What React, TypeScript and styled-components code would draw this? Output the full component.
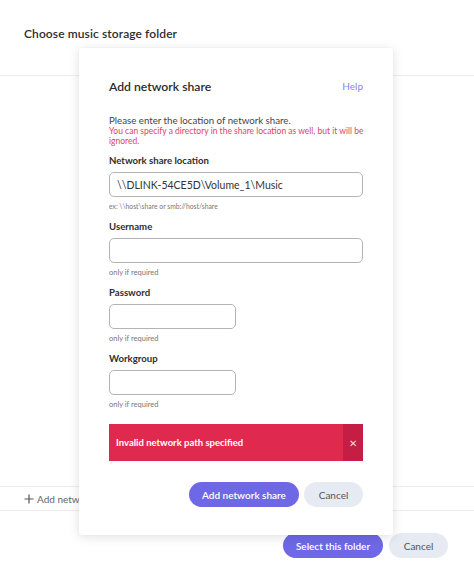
import React from "react";
import styled, { createGlobalStyle } from "styled-components";

const Global = createGlobalStyle`
  html, body { margin: 0; padding: 0; background: #fff; }
  body { font-family: Lato, "Open Sans", sans-serif; color: #333; }
  * { box-sizing: border-box; }
`;

const Page = styled.div`
  position: relative;
  width: 474px;
  height: 580px;
  overflow: hidden;
  display: flex;
  flex-direction: column;
`;

const Header = styled.div`
  height: 76px;
  border-bottom: 1px solid #ececec;
  padding: 26px 24px 0;
`;

const PageTitle = styled.h1`
  margin: 0;
  font-size: 12px;
  line-height: 16px;
  font-weight: 600;
  color: #2e2e2e;
  letter-spacing: 0.1px;
`;

const Body = styled.div`
  flex: 1;
`;

const AddRow = styled.div`
  height: 25px;
  border-top: 1px solid #ececec;
  border-bottom: 1px solid #ececec;
  display: flex;
  align-items: center;
  gap: 3px;
  padding-left: 24px;
  font-size: 10px;
  color: #666;
`;

const Footer = styled.div`
  display: flex;
  justify-content: flex-end;
  gap: 6px;
  padding: 22px 26px 22px 0;
`;

const Button = styled.button<{ $primary?: boolean; $w: number }>`
  height: 25px;
  width: ${(p) => p.$w}px;
  border: none;
  border-radius: 13px;
  font-family: Lato, sans-serif;
  font-size: 10px;
  font-weight: ${(p) => (p.$primary ? 600 : 400)};
  color: ${(p) => (p.$primary ? "#fff" : "#555")};
  background: ${(p) => (p.$primary ? "#6e68e6" : "#e6eaf3")};
  padding: 0;
  cursor: pointer;
`;

const Modal = styled.div`
  position: absolute;
  left: 79px;
  top: 48px;
  width: 314px;
  height: 487px;
  background: #fff;
  border-radius: 3px;
  box-shadow: 0 2px 12px rgba(0, 0, 0, 0.12), 0 0 2px rgba(0, 0, 0, 0.05);
  padding: 30px 30px 0;
  display: flex;
  flex-direction: column;
`;

const ModalHead = styled.div`
  display: flex;
  justify-content: space-between;
  align-items: center;
  height: 16px;
`;

const ModalTitle = styled.h2`
  margin: 0;
  font-size: 12.2px;
  font-weight: 600;
  color: #2a2a2a;
`;

const HelpLink = styled.a`
  font-size: 10px;
  color: #8a84ea;
  text-decoration: none;
`;

const Intro = styled.p`
  margin: 20px 0 0;
  font-size: 9.7px;
  color: #444;
  line-height: 12px;
`;

const Warn = styled.p`
  margin: 0 -8px 0 0;
  font-size: 8.5px;
  line-height: 10px;
  color: #e0416a;
`;

const Field = styled.div<{ $top: number }>`
  margin-top: ${(p) => p.$top}px;
  display: flex;
  flex-direction: column;
`;

const Label = styled.label`
  font-size: 9.6px;
  font-weight: 700;
  color: #2e2e2e;
  line-height: 12px;
  height: 12px;
`;

const Input = styled.input<{ $w: number }>`
  margin-top: 5px;
  width: ${(p) => p.$w}px;
  height: 25px;
  border: 1px solid #b4b4b4;
  border-radius: 5px;
  padding: 0 7px;
  font-family: Lato, sans-serif;
  font-size: 10.5px;
  color: #333;
  outline: none;
`;

const Hint = styled.div<{ $size?: number }>`
  margin-top: 5px;
  font-size: ${(p) => p.$size ?? 7.5}px;
  line-height: 9px;
  color: #777;
`;

const ErrorBar = styled.div`
  margin-top: 15px;
  height: 37px;
  display: flex;
  background: #e0294f;
  color: #fff;
`;

const ErrorText = styled.div`
  flex: 1;
  display: flex;
  align-items: center;
  padding-left: 7px;
  font-size: 9.5px;
  font-weight: 700;
`;

const CloseBox = styled.div`
  width: 20px;
  display: flex;
  align-items: center;
  justify-content: center;
  background: #c41e45;
  font-size: 10px;
  color: #ffd5df;
`;

const ModalActions = styled.div`
  margin-top: 21px;
  display: flex;
  justify-content: flex-end;
  gap: 5px;
`;

export default function App() {
  return (
    <>
      <Global />
      <Page>
        <Header>
          <PageTitle>Choose music storage folder</PageTitle>
        </Header>
        <Body />
        <AddRow>
          <svg width="10" height="10" viewBox="0 0 10 10">
            <path d="M5 0.5v9M0.5 5h9" stroke="#555" strokeWidth="1.2" />
          </svg>
          <span>Add network share</span>
        </AddRow>
        <Footer>
          <Button $primary $w={100}>Select this folder</Button>
          <Button $w={59}>Cancel</Button>
        </Footer>
        <Modal>
          <ModalHead>
            <ModalTitle>Add network share</ModalTitle>
            <HelpLink href="#">Help</HelpLink>
          </ModalHead>
          <Intro>Please enter the location of network share.</Intro>
          <Warn>You can specify a directory in the share location as well, but it will be ignored.</Warn>
          <Field $top={9}>
            <Label>Network share location</Label>
            <Input $w={254} defaultValue={"\\\\DLINK-54CE5D\\Volume_1\\Music"} />
            <Hint $size={6.8}>ex: \\host\share or smb://host/share</Hint>
          </Field>
          <Field $top={10}>
            <Label>Username</Label>
            <Input $w={254} />
            <Hint>only if required</Hint>
          </Field>
          <Field $top={10}>
            <Label>Password</Label>
            <Input $w={127} type="password" />
            <Hint>only if required</Hint>
          </Field>
          <Field $top={10}>
            <Label>Workgroup</Label>
            <Input $w={127} />
            <Hint>only if required</Hint>
          </Field>
          <ErrorBar>
            <ErrorText>Invalid network path specified</ErrorText>
            <CloseBox>✕</CloseBox>
          </ErrorBar>
          <ModalActions>
            <Button $primary $w={110}>Add network share</Button>
            <Button $w={59}>Cancel</Button>
          </ModalActions>
        </Modal>
      </Page>
    </>
  );
}
